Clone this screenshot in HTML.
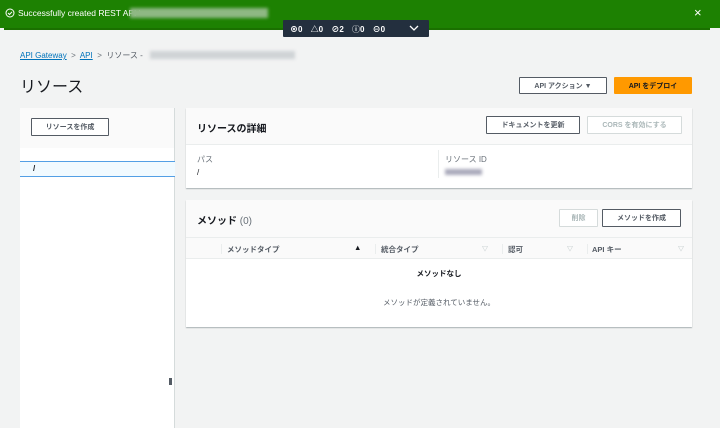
<!DOCTYPE html>
<html><head><meta charset="utf-8"><style>
*{box-sizing:border-box;margin:0;padding:0}
body{width:720px;height:420px;overflow:hidden;background:#f2f3f3;font-family:"Liberation Sans","Noto Sans CJK JP",sans-serif;color:#16191f;position:relative;font-size:8px}
.abs{position:absolute}
.banner{left:0;top:0;width:720px;height:28px;background:#1d8102;color:#fff;font-size:8.5px}
.shadow{left:4px;top:28px;width:706px;height:2px;background:#1a7000}
.blur{background:#cfd3d6;filter:blur(1.5px)}
.tb{left:283px;top:20px;width:146px;height:17px;background:#232f3e;color:#fff;font-size:8px;font-weight:bold;border-radius:1px}
.btn{position:absolute;border:1px solid #545b64;background:#fff;font-size:7px;font-weight:bold;color:#545b64;display:flex;align-items:center;justify-content:center;border-radius:1px}
.dis{border-color:#d5dbdb;color:#aab7b8}
.card{position:absolute;background:#fff;box-shadow:0 1px 1px rgba(0,28,36,.3)}
.hd{background:#fafafa;border-bottom:1px solid #eaeded}
</style></head><body>
<div class="abs banner">
 <svg class="abs" style="left:5px;top:8px" width="10" height="10" viewBox="0 0 10 10"><circle cx="5" cy="5" r="4" fill="none" stroke="#fff" stroke-width="1"/><path d="M3 5l1.5 1.5L7 3.8" fill="none" stroke="#fff" stroke-width="1"/></svg>
 <div class="abs" style="left:18px;top:8px">Successfully created REST API '</div>
 <div class="abs blur" style="left:130px;top:8px;width:138px;height:10px;background:#8fb884"></div>
 <div class="abs" style="left:694px;top:5px;font-size:13px">×</div>
</div>
<div class="abs shadow"></div>
<div class="abs tb">
 <div class="abs" style="left:7px;top:4px;word-spacing:6px">⊗0 △0 ⊘2 ⓘ0 ⊖0</div>
 <svg class="abs" style="left:126px;top:5px" width="10" height="7"><path d="M1 1l4 4 4-4" fill="none" stroke="#fff" stroke-width="1.3"/></svg>
</div>
<div class="abs" style="left:20px;top:50px;font-size:8px;color:#0073bb"><span style="text-decoration:underline">API Gateway</span> <span style="color:#687078">&nbsp;&gt;&nbsp;</span> <span style="text-decoration:underline">API</span> <span style="color:#687078">&nbsp;&gt;&nbsp;</span> <span style="color:#545b64">リソース -</span></div>
<div class="abs blur" style="left:150px;top:51px;width:145px;height:8px"></div>
<div class="abs" style="left:20px;top:73px;font-size:16px">リソース</div>
<div class="btn" style="left:519px;top:77px;width:88px;height:17px">API アクション ▼</div>
<div class="btn" style="left:614px;top:77px;width:78px;height:17px;background:#f90;border-color:#f90;color:#16191f">API をデプロイ</div>

<div class="card" style="left:20px;top:108px;width:155px;height:320px;box-shadow:none;border-right:1px solid #d5dbdb">
 <div class="hd" style="height:40px;border:none"></div>
 <div class="btn" style="left:11px;top:10px;width:78px;height:18px">リソースを作成</div>
 <div class="abs" style="left:0;top:53px;width:155px;height:16px;background:#f1faff;border-top:1px solid #539fe5;border-bottom:1px solid #539fe5;font-weight:bold;padding:2px 0 0 13px">/</div>
 <div class="abs" style="left:149px;top:270px;width:3px;height:7px;background:#545b64"></div>
</div>

<div class="card" style="left:186px;top:108px;width:506px;height:80px">
 <div class="hd" style="height:37px"></div>
 <div class="abs" style="left:11px;top:12px;font-size:10px;font-weight:bold">リソースの詳細</div>
 <div class="btn" style="left:300px;top:8px;width:94px;height:18px">ドキュメントを更新</div>
 <div class="btn dis" style="left:401px;top:8px;width:95px;height:18px">CORS を有効にする</div>
 <div class="abs" style="left:11px;top:46px;color:#687078">パス</div>
 <div class="abs" style="left:11px;top:60px">/</div>
 <div class="abs" style="left:252px;top:42px;width:1px;height:28px;background:#eaeded"></div>
 <div class="abs" style="left:259px;top:46px;color:#687078">リソース ID</div>
 <div class="abs blur" style="left:259px;top:61px;width:37px;height:6px;background:#aab"></div>
</div>

<div class="card" style="left:186px;top:200px;width:506px;height:127px">
 <div class="hd" style="height:37px;border:none"></div>
 <div class="abs" style="left:11px;top:12px;font-size:10px;font-weight:bold">メソッド <span style="font-weight:normal;color:#687078">(0)</span></div>
 <div class="btn dis" style="left:373px;top:9px;width:39px;height:18px">削除</div>
 <div class="btn" style="left:416px;top:9px;width:79px;height:18px">メソッドを作成</div>
 <div class="abs" style="left:0;top:37px;width:506px;height:22px;background:#fafafa;border-top:1px solid #eaeded;border-bottom:1px solid #eaeded;font-weight:bold;color:#545b64;font-size:7.5px">
  <div class="abs" style="left:35px;top:6px;width:1px;height:10px;background:#eaeded"></div>
  <div class="abs" style="left:41px;top:6px">メソッドタイプ</div><div class="abs" style="left:168px;top:5px;color:#16191f">▲</div>
  <div class="abs" style="left:189px;top:6px;width:1px;height:10px;background:#eaeded"></div>
  <div class="abs" style="left:195px;top:6px">統合タイプ</div><div class="abs" style="left:296px;top:6px;color:#aab7b8;font-size:6px">▽</div>
  <div class="abs" style="left:316px;top:6px;width:1px;height:10px;background:#eaeded"></div>
  <div class="abs" style="left:322px;top:6px">認可</div><div class="abs" style="left:381px;top:6px;color:#aab7b8;font-size:6px">▽</div>
  <div class="abs" style="left:401px;top:6px;width:1px;height:10px;background:#eaeded"></div>
  <div class="abs" style="left:406px;top:6px">API キー</div><div class="abs" style="left:492px;top:6px;color:#aab7b8;font-size:6px">▽</div>
 </div>
 <div class="abs" style="left:0;top:68px;width:506px;text-align:center;font-weight:bold;font-size:7.5px">メソッドなし</div>
 <div class="abs" style="left:0;top:97px;width:506px;text-align:center;font-size:7.5px;color:#545b64">メソッドが定義されていません。</div>
</div>
</body></html>
